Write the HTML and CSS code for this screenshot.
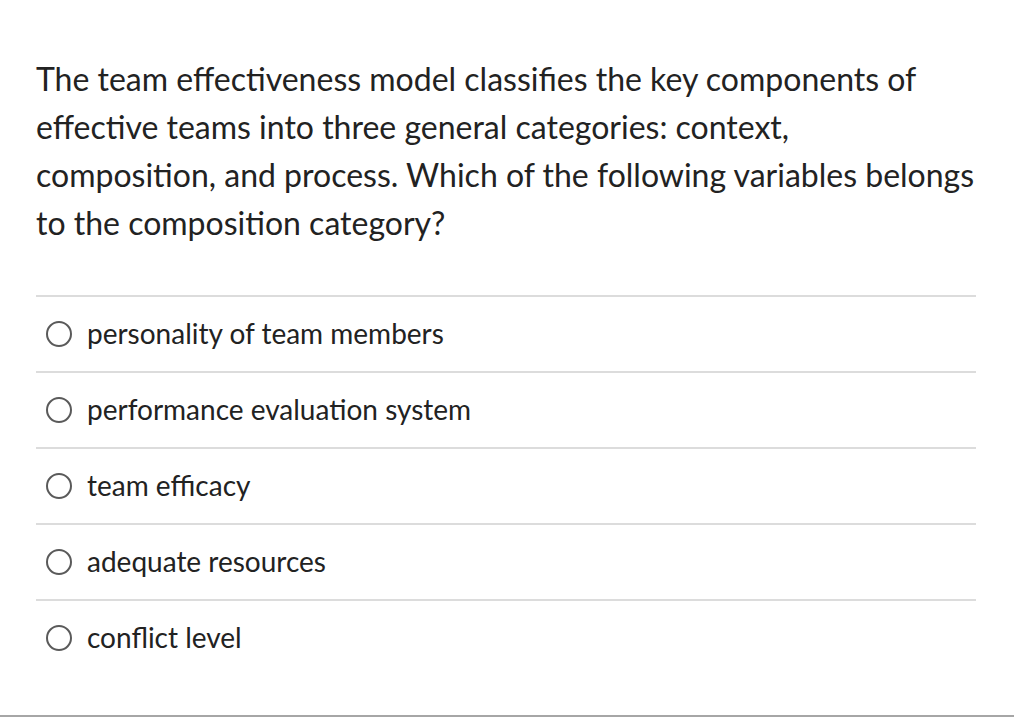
FILE: index.html
```html
<!DOCTYPE html>
<html>
<head>
<meta charset="utf-8">
<link rel="stylesheet" href="styles.css">
</head>
<body>
<div class="quiz">
  <p class="question">The team effectiveness model classifies the key components of effective teams into three general categories: context, composition, and process. Which of the following variables belongs to the composition category?</p>
  <div class="answers">
    <label class="answer"><span class="radio"></span><span class="text">personality of team members</span></label>
    <label class="answer"><span class="radio"></span><span class="text">performance evaluation system</span></label>
    <label class="answer"><span class="radio"></span><span class="text">team efficacy</span></label>
    <label class="answer"><span class="radio"></span><span class="text">adequate resources</span></label>
    <label class="answer"><span class="radio"></span><span class="text">conflict level</span></label>
  </div>
</div>
<div class="bottom-rule"></div>
</body>
</html>
```

FILE: styles.css
```css
html, body {
  margin: 0;
  padding: 0;
  background: #fff;
}
body {
  font-family: Lato, "Open Sans", sans-serif;
  color: #222;
  height: 722px;
  display: flex;
  flex-direction: column;
}
.quiz {
  padding: 55px 38px 0 36px;
  width: 940px;
  flex: 1;
}
.question {
  margin: 0;
  font-size: 32px;
  line-height: 48px;
}
.answers {
  margin-top: 48px;
  border-top: 2px solid #dcdcdc;
}
.answer {
  display: flex;
  align-items: center;
  height: 74px;
  border-bottom: 2px solid #dcdcdc;
  padding-left: 10px;
}
.answer:last-child {
  border-bottom: none;
}
.radio {
  width: 22px;
  height: 22px;
  border: 2px solid #5a5a5a;
  border-radius: 50%;
  margin-right: 15px;
  margin-bottom: 1px;
  flex: none;
}
.text {
  font-size: 28px;
  margin-bottom: 3px;
}
.bottom-rule {
  height: 2px;
  background: #a6a6a6;
  margin-bottom: 5px;
}
```
